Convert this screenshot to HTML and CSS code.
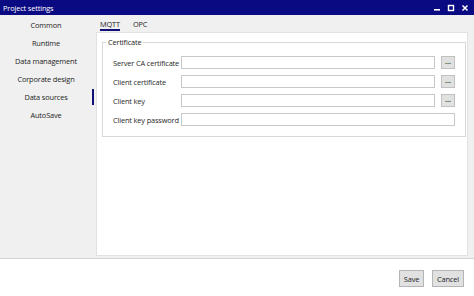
FILE: index.html
```html
<!DOCTYPE html>
<html>
<head>
<meta charset="utf-8">
<link rel="stylesheet" href="styles.css">
</head>
<body>
<div class="window">
  <div class="titlebar">
    <span class="title">Project settings</span>
    <div class="controls">
      <svg width="8" height="8" viewBox="0 0 8 8"><rect x="1" y="5" width="6" height="1.6" fill="#fff"/></svg>
      <svg width="8" height="8" viewBox="0 0 8 8"><rect x="1.5" y="1.5" width="5" height="5" fill="none" stroke="#fff" stroke-width="1.4"/></svg>
      <svg width="8" height="8" viewBox="0 0 8 8"><path d="M1.5 1.5 L6.5 6.5 M6.5 1.5 L1.5 6.5" stroke="#fff" stroke-width="1.5"/></svg>
    </div>
  </div>
  <div class="main">
    <nav class="sidebar">
      <div class="nav-item">Common</div>
      <div class="nav-item">Runtime</div>
      <div class="nav-item">Data management</div>
      <div class="nav-item">Corporate design</div>
      <div class="nav-item active">Data sources</div>
      <div class="nav-item">AutoSave</div>
    </nav>
    <section class="content">
      <div class="tabs">
        <span class="tab active">MQTT</span>
        <span class="tab">OPC</span>
      </div>
      <div class="panel">
        <fieldset class="group">
          <legend>Certificate</legend>
          <div class="form">
            <label>Server CA certificate</label>
            <div class="input"></div>
            <div class="browse">...</div>
            <label>Client certificate</label>
            <div class="input"></div>
            <div class="browse">...</div>
            <label>Client key</label>
            <div class="input"></div>
            <div class="browse">...</div>
            <label>Client key password</label>
            <div class="input wide"></div>
          </div>
        </fieldset>
      </div>
    </section>
  </div>
  <div class="footer">
    <button class="btn save">Save</button>
    <button class="btn cancel">Cancel</button>
  </div>
</div>
</body>
</html>
```
FILE: styles.css
```css
* { box-sizing: border-box; }
html, body { margin: 0; padding: 0; }
body {
  width: 474px;
  height: 296px;
  overflow: hidden;
  font-family: "Open Sans", "Noto Sans", sans-serif;
  font-size: 7.4px;
  letter-spacing: -0.15px;
  color: #1a1a1a;
  background: #fff;
}
.window {
  display: flex;
  flex-direction: column;
  height: 296px;
}
.titlebar {
  height: 15px;
  flex: none;
  background: #0a0a82;
  color: #fff;
  display: flex;
  align-items: center;
  padding-left: 3px;
  padding-right: 5px;
}
.title { font-size: 7.4px; flex: 1; }
.controls {
  display: flex;
  gap: 6px;
  align-items: center;
}
.controls svg { display: block; }
.main {
  flex: 1;
  display: flex;
  background: #f0f0f0;
}
.sidebar {
  width: 96px;
  flex: none;
  padding-top: 1px;
  display: flex;
  flex-direction: column;
}
.nav-item {
  height: 18px;
  width: 94px;
  line-height: 18px;
  padding-right: 2px;
  text-align: center;
  color: #1e1e1e;
}
.nav-item.active {
  background: linear-gradient(#101078, #101078) right center / 2px 16px no-repeat;
}
.content {
  flex: 1;
  display: flex;
  flex-direction: column;
  padding-right: 6px;
  padding-bottom: 2px;
}
.tabs {
  height: 17px;
  flex: none;
  display: flex;
  gap: 13px;
  padding-left: 4px;
  align-items: stretch;
}
.tab {
  line-height: 15px;
  padding-top: 2px;
  color: #1e1e1e;
}
.tab.active {
  border-bottom: 2px solid #101078;
  height: 16px;
}
.panel {
  flex: 1;
  background: #fff;
  border: 1px solid #e2e2e2;
  padding: 4px 1px 0 5px;
}
.group {
  margin: 0;
  border: 1px solid #d8d8d8;
  padding: 9px 10px 10px 10px;
  min-width: 0;
}
.group legend {
  padding: 0 2px;
  margin-left: -7px;
  font-size: 7.4px;
  color: #1e1e1e;
}
.form {
  display: grid;
  grid-template-columns: 62px 1fr 14px;
  column-gap: 6px;
  row-gap: 6px;
  align-items: center;
}
.form label { color: #2a2a2a; white-space: nowrap; }
.input {
  height: 13px;
  border: 1px solid #c8c8c8;
  background: #fff;
}
.input.wide { grid-column: 2 / 4; }
.browse {
  height: 13px;
  width: 14px;
  background: #e1e1e1;
  border: 1px solid #c0c0c0;
  font-size: 7px;
  font-weight: bold;
  letter-spacing: 0;
  line-height: 9px;
  text-align: center;
  color: #333;
}
.footer {
  height: 38px;
  flex: none;
  border-top: 1px solid #d4d4d4;
  background: #fff;
  display: flex;
  justify-content: flex-end;
  align-items: flex-start;
  gap: 8px;
  padding: 11px 10px 0 0;
}
.btn {
  height: 17px;
  margin: 0;
  padding: 0;
  font-family: "Open Sans", "Noto Sans", sans-serif;
  font-size: 7.4px;
  letter-spacing: -0.15px;
  color: #1e1e1e;
  background: #e1e1e1;
  border: 1px solid #b5b5b5;
}
.save { width: 25px; }
.cancel { width: 32px; }
```
